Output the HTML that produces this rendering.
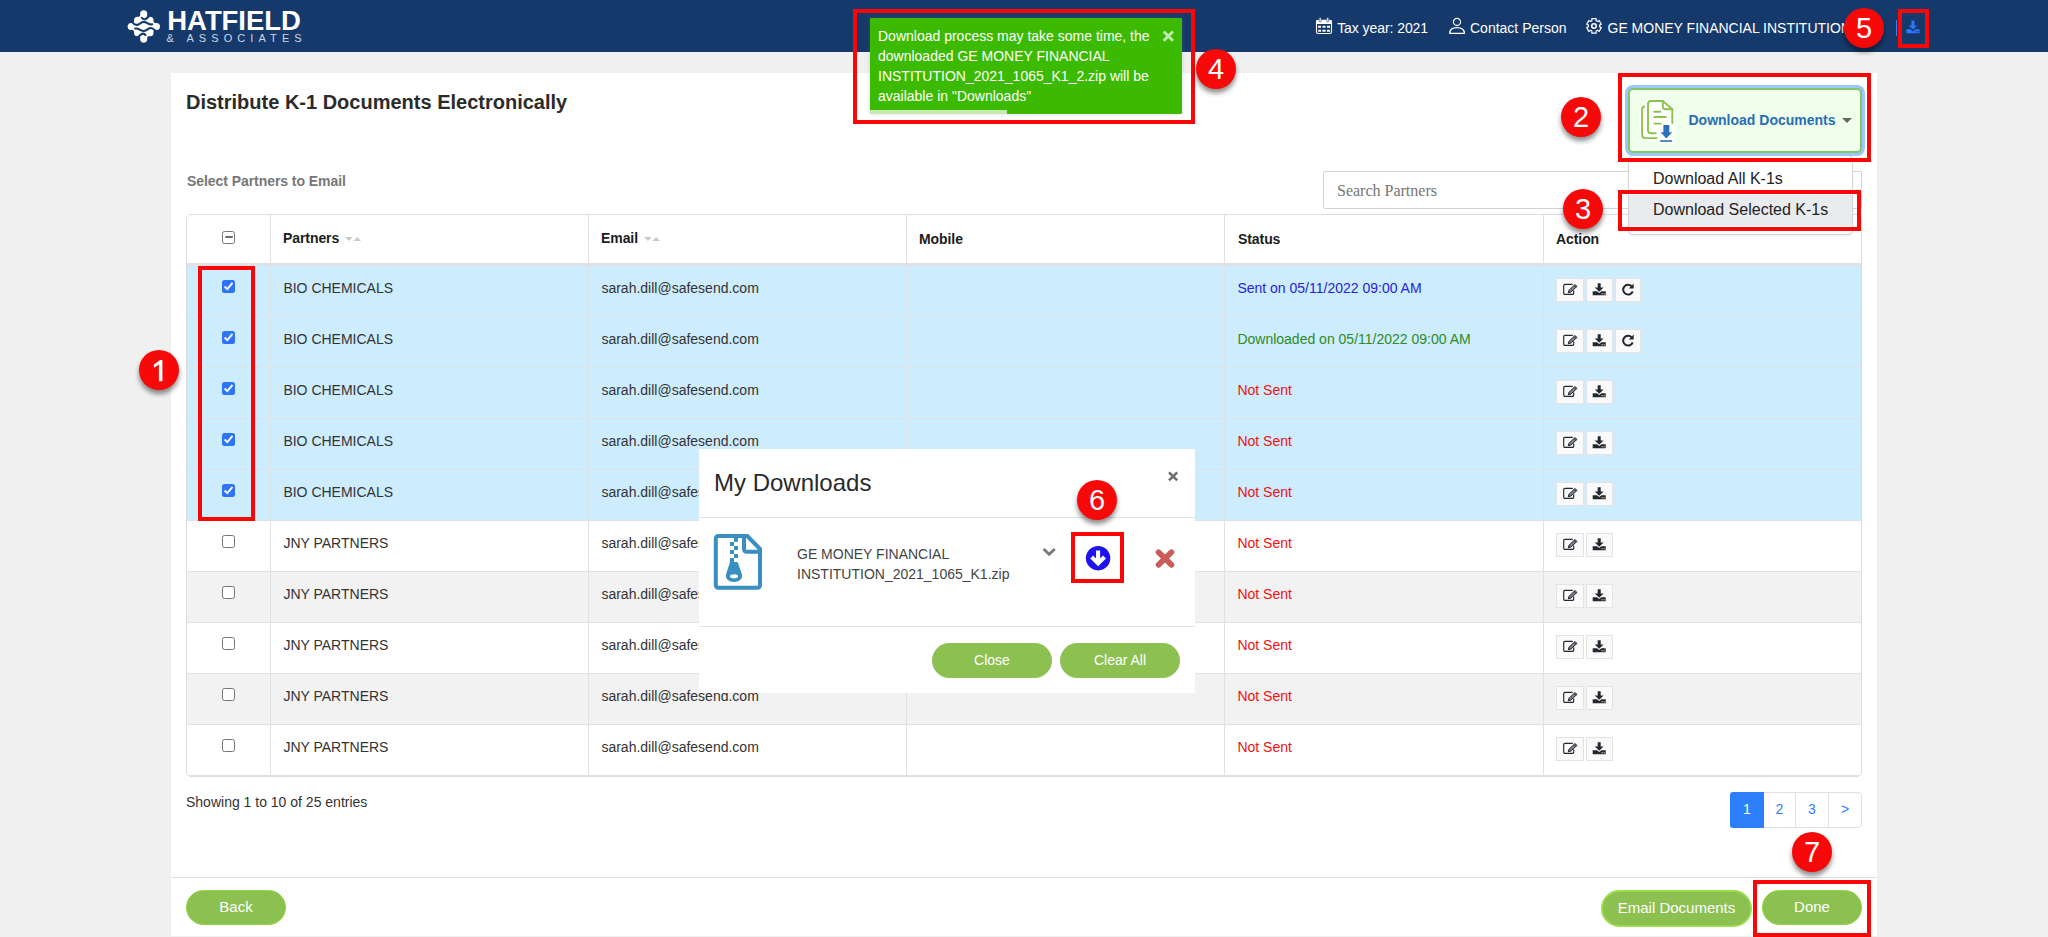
<!DOCTYPE html>
<html>
<head>
<meta charset="utf-8">
<title>Distribute K-1 Documents</title>
<style>
*{box-sizing:border-box;margin:0;padding:0}
html,body{width:2048px;height:937px;overflow:hidden}
body{background:#f0f0f0;font-family:"Liberation Sans",sans-serif;font-size:14px;color:#333;position:relative}
.abs{position:absolute}
svg{display:block}
#hdr{position:absolute;left:0;top:0;width:2048px;height:52px;background:#16396c}
#card{position:absolute;left:171px;top:73px;width:1706px;height:863px;background:#fff}
.nav{position:absolute;top:19px;color:#fff;font-size:14px;line-height:18px;white-space:nowrap}
.t{position:absolute;white-space:nowrap}
#tbl{position:absolute;left:186px;top:214px;width:1676px;height:563px;border:1px solid #ddd;border-radius:5px;background:#fff;overflow:hidden}
.row{position:absolute;left:0;width:1674px;height:51px;border-top:1px solid #dee2e6}
.row.sel{background:#cdecfe}
.row.odd{background:#f2f2f2}
.c{position:absolute;top:0;height:100%;border-left:1px solid #dee2e6}
.c1{left:83px;width:318px}.c2{left:401px;width:318px}.c3{left:719px;width:318px}.c4{left:1037px;width:319px}.c5{left:1356px;width:318px}
.th{position:absolute;left:12px;letter-spacing:-0.08px;top:15px;font-weight:bold;font-size:14px;line-height:18px;color:#1a1d20;white-space:nowrap}
.c4 .th{left:13px}
.c2 .th,.c1 .th{top:14px}
.sort{position:absolute;top:22px}
.s_Partners{left:74px}.s_Email{left:54.500px}
.sort i{position:absolute;width:0;height:0;border-left:3.800px solid transparent;border-right:3.800px solid transparent}
.sort .dn{left:0;top:0;border-top:4px solid #c8c8c8}
.sort .up{left:8.300px;top:0;border-bottom:4px solid #c8c8c8}
.row .tx{position:absolute;left:12.400px;top:13px;line-height:18px;white-space:nowrap;color:#333}
.blue{color:#2424dc!important}.green{color:#2e8b1e!important}.red{color:#ee1111!important}
.cb{position:absolute;left:35px;top:14px;width:13px;height:13px;border:1px solid #767676;border-radius:2.500px;background:#fff}
.cb.on{background:#2e74f6;border:none}
.cb.ind i{position:absolute;left:1.500px;top:4px;width:8px;height:2.200px;border-radius:1px;background:#6e6e6e}
.ab{position:absolute;top:12px;height:24px;border:1px solid #e3e3e3;background:#fafafa}
.ab svg{position:absolute;left:5.700px;top:4px}
.ab svg.dl{left:5.200px}.ab svg.rf{left:4.800px}
.pg{position:absolute;top:-1px;margin-left:-1px;height:36px;line-height:35px;text-align:center;font-size:14px}
.rr{position:absolute;border:4px solid #f90606}
.num{position:absolute;width:40px;height:40px;border-radius:50%;background:#f80909;color:#fff;font-size:29px;line-height:41px;text-align:center;box-shadow:0 4px 5px rgba(0,0,0,.45)}
.pill{position:absolute;border-radius:19px;background:#8cc152;color:#fff;font-size:15px;text-align:center;white-space:nowrap}
</style>
</head>
<body>
<div id="hdr"></div>
<svg class="abs" style="left:120px;top:4px" width="50" height="44" viewBox="120 4 50 44"><path d="M143.7 13.9L131.2 26.500L143.7 39.100L156.4 26.500Z" fill="#fff" stroke="#fff" stroke-width="2.600" stroke-linejoin="round"/><circle cx="143.7" cy="13.9" r="3.550" fill="#fff"/><circle cx="137.6" cy="20.2" r="3.550" fill="#fff"/><circle cx="150" cy="20.2" r="3.550" fill="#fff"/><circle cx="131.2" cy="26.5" r="3.550" fill="#fff"/><circle cx="143.7" cy="26.5" r="3.550" fill="#fff"/><circle cx="156.4" cy="26.5" r="3.550" fill="#fff"/><circle cx="137.6" cy="32.8" r="3.550" fill="#fff"/><circle cx="150" cy="32.8" r="3.550" fill="#fff"/><circle cx="143.7" cy="39.1" r="3.550" fill="#fff"/><g fill="none" stroke="#16396c" stroke-width="2.100" stroke-linecap="round"><path d="M141.9 17.900C143 19.300 145 19.500 146.600 18.300C147.600 17.600 148.400 16.700 149.300 15.500"/><path d="M132.6 22.600C134.300 24.600 136.200 25.100 137.800 24.700C139.800 24.200 141.400 21.900 143.700 21.850C146 21.800 148 24 150.500 24.400C151.200 24.500 151.800 24.400 152.200 24.300"/><path d="M154.800 30.300C153.100 28.300 151.200 27.800 149.600 28.200C147.600 28.700 146 31 143.700 31.050C141.400 31.100 139.400 28.900 136.900 28.500C136.200 28.400 135.600 28.500 135.200 28.600"/><path d="M145.500 35C144.400 33.600 142.400 33.400 140.800 34.600C139.800 35.300 139 36.200 138.100 37.400"/></g></svg>
<div class="t" style="left:167.3px;top:5.900px;font-size:27.500px;line-height:30px;font-weight:bold;color:#fff;letter-spacing:-0.05px">HATFIELD</div>
<div class="t" style="left:166.5px;top:31.300px;font-size:11px;line-height:14px;color:#d0d7e3;letter-spacing:5.080px">&amp; ASSOCIATES</div>
<svg class="abs" style="left:1315px;top:17px" width="18" height="18" viewBox="1315 17 18 18"><rect x="1316.5" y="20.4" width="15" height="13.1" rx="1.6" fill="none" stroke="#fff" stroke-width="1.1"/><rect x="1316.5" y="20.4" width="15" height="3.6" fill="#fff"/><rect x="1319.2" y="17.6" width="1.9" height="4.4" rx="0.9" fill="#fff" stroke="#16396c" stroke-width="0.6"/><rect x="1326.8" y="17.6" width="1.9" height="4.4" rx="0.9" fill="#fff" stroke="#16396c" stroke-width="0.6"/><rect x="1318.10" y="25.75" width="3" height="1.9" rx="0.3" fill="#fff"/><rect x="1318.10" y="29.85" width="3" height="1.9" rx="0.3" fill="#fff"/><rect x="1322.55" y="25.75" width="3" height="1.9" rx="0.3" fill="#fff"/><rect x="1322.55" y="29.85" width="3" height="1.9" rx="0.3" fill="#fff"/><rect x="1327.00" y="25.75" width="3" height="1.9" rx="0.3" fill="#fff"/><rect x="1327.00" y="29.85" width="3" height="1.9" rx="0.3" fill="#fff"/></svg>
<div class="nav" style="left:1337.200px;letter-spacing:-0.070px">Tax year: 2021</div>
<svg class="abs" style="left:1448px;top:17px" width="18" height="18" viewBox="1448 17 18 18" fill="none" stroke="#fff" stroke-width="1.25" stroke-linejoin="round"><circle cx="1457" cy="21.9" r="3.55"/><path d="M1449.7 33.3 L1464.4 33.3 C1464.4 29.6 1461.5 27.5 1457.05 27.5 C1452.6 27.5 1449.7 29.6 1449.7 33.3 Z"/></svg>
<div class="nav" style="left:1470px">Contact Person</div>
<svg class="abs" style="left:1585px;top:17px" width="18" height="18" viewBox="1585 17 18 18" fill="none" stroke="#fff" stroke-width="1.2" stroke-linejoin="round"><path d="M1591.88 20.72 L1591.83 18.72 L1596.17 18.72 L1596.12 20.72 L1597.43 21.48 L1599.13 20.43 L1601.30 24.19 L1599.55 25.14 L1599.55 26.66 L1601.30 27.61 L1599.13 31.37 L1597.43 30.32 L1596.12 31.08 L1596.17 33.08 L1591.83 33.08 L1591.88 31.08 L1590.57 30.32 L1588.87 31.37 L1586.70 27.61 L1588.45 26.66 L1588.45 25.14 L1586.70 24.19 L1588.87 20.43 L1590.57 21.48Z"/><circle cx="1594" cy="25.9" r="2.250" stroke-width="1.550"/></svg>
<div class="nav" style="left:1607.5px">GE MONEY FINANCIAL INSTITUTION</div>
<div class="abs" style="left:1896px;top:20px;width:1px;height:16px;background:#3c82fa"></div>
<svg class="abs" style="left:1905px;top:19px" width="17" height="16" viewBox="0 0 17 16"><path d="M6.4 1.6h3v5h2.9L7.9 10.6 3.5 6.6h2.9z" fill="#2d78fa"/><path d="M1.3 10.2h3.9l2.7 2.3 2.7-2.3h3.9v4H1.3z" fill="#2d78fa"/><rect x="10.3" y="12.2" width="1.2" height="1" fill="#16396c"/><rect x="12.3" y="12.2" width="1.2" height="1" fill="#16396c"/></svg>
<div id="card"></div>
<div class="t" style="left:186px;top:90px;font-size:20px;line-height:24px;font-weight:bold;color:#2b2b2b">Distribute K-1 Documents Electronically</div>
<div class="t" style="left:187px;top:172px;font-size:14px;line-height:18px;font-weight:bold;color:#777;letter-spacing:-0.060px">Select Partners to Email</div>
<div class="abs" style="left:1323px;top:171px;width:539px;height:38px;border:1px solid #ced4da;border-radius:2px;background:#fff"></div>
<div class="t" style="left:1337px;top:181px;font-family:'Liberation Serif',serif;font-size:16px;line-height:20px;color:#757575">Search Partners</div>
<div id="tbl">
<div class="abs" style="left:0;top:0;width:1674px;height:50px;border-bottom:2px solid #dee2e6"><div class="cb ind" style="top:16px"><i></i></div><div class="c c1"><span class="th">Partners</span><svg class="sort s_Partners" width="17" height="5" viewBox="0 0 17 5"><path d="M0.100 0h7.600l-3.800 4.100zM8.400 4.100l3.800-4.100 3.800 4.100z" fill="#c9c9c9"/></svg></div><div class="c c2"><span class="th">Email</span><svg class="sort s_Email" width="17" height="5" viewBox="0 0 17 5"><path d="M0.100 0h7.600l-3.800 4.100zM8.400 4.100l3.800-4.100 3.800 4.100z" fill="#c9c9c9"/></svg></div><div class="c c3"><span class="th">Mobile</span></div><div class="c c4"><span class="th">Status</span></div><div class="c c5"><span class="th">Action</span></div></div>
<div class="row sel" style="top:50px"><div class="cb on"><svg width="13" height="13" viewBox="0 0 13 13"><path d="M2.600 6.500l2.700 2.700 5.200-6.300" fill="none" stroke="#fff" stroke-width="1.900"/></svg></div><div class="c c1"><span class="tx">BIO CHEMICALS</span></div><div class="c c2"><span class="tx">sarah.dill@safesend.com</span></div><div class="c c3"></div><div class="c c4"><span class="tx blue">Sent on 05/11/2022 09:00 AM</span></div><div class="c c5"><div class="ab" style="left:12px;width:28px"><svg width="16" height="13" viewBox="0 0 16 13"><path d="M10.700 7.900V10.100a1.300 1.300 0 0 1-1.300 1.300H2a1.300 1.300 0 0 1-1.300-1.300V2.700a1.300 1.300 0 0 1 1.300-1.300H9.300" fill="none" stroke="#23272f" stroke-width="1.150" stroke-linecap="round"/><path d="M5.300 9.700L5.940 7.250L12.080 1.470L13.920 3.430L7.780 9.210Z" fill="#7c8088" stroke="#23272f" stroke-width="0.950" stroke-linejoin="round"/><path d="M5.300 9.700L5.800 7.900L7.100 9.200Z" fill="#23272f"/><path d="M11.100 2.400L13 4.400" stroke="#23272f" stroke-width="0.900"/></svg></div><div class="ab" style="left:42px;width:27px"><svg class="dl" width="15" height="13" viewBox="0 0 15 13"><path d="M5.700.300h3v4.300h2.900L7.200 8.700 2.800 4.600h2.900z" fill="#23272f"/><path d="M.700 8.200h4.300l2.200 1.900 2.200-1.900h4.300v4H.700z" fill="#23272f"/><rect x="9.500" y="10.300" width="1.150" height="1" fill="#f3ecc0"/><rect x="11.550" y="10.300" width="1.150" height="1" fill="#f3ecc0"/></svg></div><div class="ab" style="left:71px;width:26px"><svg class="rf" width="14" height="13" viewBox="0 0 14 13"><path d="M10.700 3.300A4.900 4.900 0 1 0 11.700 8.300" fill="none" stroke="#23272f" stroke-width="2"/><path d="M12.700.500v4.900H7.800z" fill="#23272f"/></svg></div></div></div>
<div class="row sel" style="top:101px"><div class="cb on"><svg width="13" height="13" viewBox="0 0 13 13"><path d="M2.600 6.500l2.700 2.700 5.200-6.300" fill="none" stroke="#fff" stroke-width="1.900"/></svg></div><div class="c c1"><span class="tx">BIO CHEMICALS</span></div><div class="c c2"><span class="tx">sarah.dill@safesend.com</span></div><div class="c c3"></div><div class="c c4"><span class="tx green">Downloaded on 05/11/2022 09:00 AM</span></div><div class="c c5"><div class="ab" style="left:12px;width:28px"><svg width="16" height="13" viewBox="0 0 16 13"><path d="M10.700 7.900V10.100a1.300 1.300 0 0 1-1.300 1.300H2a1.300 1.300 0 0 1-1.300-1.300V2.700a1.300 1.300 0 0 1 1.300-1.300H9.300" fill="none" stroke="#23272f" stroke-width="1.150" stroke-linecap="round"/><path d="M5.300 9.700L5.940 7.250L12.080 1.470L13.920 3.430L7.780 9.210Z" fill="#7c8088" stroke="#23272f" stroke-width="0.950" stroke-linejoin="round"/><path d="M5.300 9.700L5.800 7.900L7.100 9.200Z" fill="#23272f"/><path d="M11.100 2.400L13 4.400" stroke="#23272f" stroke-width="0.900"/></svg></div><div class="ab" style="left:42px;width:27px"><svg class="dl" width="15" height="13" viewBox="0 0 15 13"><path d="M5.700.300h3v4.300h2.900L7.200 8.700 2.800 4.600h2.900z" fill="#23272f"/><path d="M.700 8.200h4.300l2.200 1.900 2.200-1.900h4.300v4H.700z" fill="#23272f"/><rect x="9.500" y="10.300" width="1.150" height="1" fill="#f3ecc0"/><rect x="11.550" y="10.300" width="1.150" height="1" fill="#f3ecc0"/></svg></div><div class="ab" style="left:71px;width:26px"><svg class="rf" width="14" height="13" viewBox="0 0 14 13"><path d="M10.700 3.300A4.900 4.900 0 1 0 11.700 8.300" fill="none" stroke="#23272f" stroke-width="2"/><path d="M12.700.500v4.900H7.800z" fill="#23272f"/></svg></div></div></div>
<div class="row sel" style="top:152px"><div class="cb on"><svg width="13" height="13" viewBox="0 0 13 13"><path d="M2.600 6.500l2.700 2.700 5.200-6.300" fill="none" stroke="#fff" stroke-width="1.900"/></svg></div><div class="c c1"><span class="tx">BIO CHEMICALS</span></div><div class="c c2"><span class="tx">sarah.dill@safesend.com</span></div><div class="c c3"></div><div class="c c4"><span class="tx red">Not Sent</span></div><div class="c c5"><div class="ab" style="left:12px;width:28px"><svg width="16" height="13" viewBox="0 0 16 13"><path d="M10.700 7.900V10.100a1.300 1.300 0 0 1-1.300 1.300H2a1.300 1.300 0 0 1-1.300-1.300V2.700a1.300 1.300 0 0 1 1.300-1.300H9.300" fill="none" stroke="#23272f" stroke-width="1.150" stroke-linecap="round"/><path d="M5.300 9.700L5.940 7.250L12.080 1.470L13.920 3.430L7.780 9.210Z" fill="#7c8088" stroke="#23272f" stroke-width="0.950" stroke-linejoin="round"/><path d="M5.300 9.700L5.800 7.900L7.100 9.200Z" fill="#23272f"/><path d="M11.100 2.400L13 4.400" stroke="#23272f" stroke-width="0.900"/></svg></div><div class="ab" style="left:42px;width:27px"><svg class="dl" width="15" height="13" viewBox="0 0 15 13"><path d="M5.700.300h3v4.300h2.900L7.200 8.700 2.800 4.600h2.900z" fill="#23272f"/><path d="M.700 8.200h4.300l2.200 1.900 2.200-1.900h4.300v4H.700z" fill="#23272f"/><rect x="9.500" y="10.300" width="1.150" height="1" fill="#f3ecc0"/><rect x="11.550" y="10.300" width="1.150" height="1" fill="#f3ecc0"/></svg></div></div></div>
<div class="row sel" style="top:203px"><div class="cb on"><svg width="13" height="13" viewBox="0 0 13 13"><path d="M2.600 6.500l2.700 2.700 5.200-6.300" fill="none" stroke="#fff" stroke-width="1.900"/></svg></div><div class="c c1"><span class="tx">BIO CHEMICALS</span></div><div class="c c2"><span class="tx">sarah.dill@safesend.com</span></div><div class="c c3"></div><div class="c c4"><span class="tx red">Not Sent</span></div><div class="c c5"><div class="ab" style="left:12px;width:28px"><svg width="16" height="13" viewBox="0 0 16 13"><path d="M10.700 7.900V10.100a1.300 1.300 0 0 1-1.300 1.300H2a1.300 1.300 0 0 1-1.300-1.300V2.700a1.300 1.300 0 0 1 1.300-1.300H9.300" fill="none" stroke="#23272f" stroke-width="1.150" stroke-linecap="round"/><path d="M5.300 9.700L5.940 7.250L12.080 1.470L13.920 3.430L7.780 9.210Z" fill="#7c8088" stroke="#23272f" stroke-width="0.950" stroke-linejoin="round"/><path d="M5.300 9.700L5.800 7.900L7.100 9.200Z" fill="#23272f"/><path d="M11.100 2.400L13 4.400" stroke="#23272f" stroke-width="0.900"/></svg></div><div class="ab" style="left:42px;width:27px"><svg class="dl" width="15" height="13" viewBox="0 0 15 13"><path d="M5.700.300h3v4.300h2.900L7.200 8.700 2.800 4.600h2.900z" fill="#23272f"/><path d="M.700 8.200h4.300l2.200 1.900 2.200-1.900h4.300v4H.700z" fill="#23272f"/><rect x="9.500" y="10.300" width="1.150" height="1" fill="#f3ecc0"/><rect x="11.550" y="10.300" width="1.150" height="1" fill="#f3ecc0"/></svg></div></div></div>
<div class="row sel" style="top:254px"><div class="cb on"><svg width="13" height="13" viewBox="0 0 13 13"><path d="M2.600 6.500l2.700 2.700 5.200-6.300" fill="none" stroke="#fff" stroke-width="1.900"/></svg></div><div class="c c1"><span class="tx">BIO CHEMICALS</span></div><div class="c c2"><span class="tx">sarah.dill@safesend.com</span></div><div class="c c3"></div><div class="c c4"><span class="tx red">Not Sent</span></div><div class="c c5"><div class="ab" style="left:12px;width:28px"><svg width="16" height="13" viewBox="0 0 16 13"><path d="M10.700 7.900V10.100a1.300 1.300 0 0 1-1.300 1.300H2a1.300 1.300 0 0 1-1.300-1.300V2.700a1.300 1.300 0 0 1 1.300-1.300H9.300" fill="none" stroke="#23272f" stroke-width="1.150" stroke-linecap="round"/><path d="M5.300 9.700L5.940 7.250L12.080 1.470L13.920 3.430L7.780 9.210Z" fill="#7c8088" stroke="#23272f" stroke-width="0.950" stroke-linejoin="round"/><path d="M5.300 9.700L5.800 7.900L7.100 9.200Z" fill="#23272f"/><path d="M11.100 2.400L13 4.400" stroke="#23272f" stroke-width="0.900"/></svg></div><div class="ab" style="left:42px;width:27px"><svg class="dl" width="15" height="13" viewBox="0 0 15 13"><path d="M5.700.300h3v4.300h2.900L7.200 8.700 2.800 4.600h2.900z" fill="#23272f"/><path d="M.700 8.200h4.300l2.200 1.900 2.200-1.900h4.300v4H.700z" fill="#23272f"/><rect x="9.500" y="10.300" width="1.150" height="1" fill="#f3ecc0"/><rect x="11.550" y="10.300" width="1.150" height="1" fill="#f3ecc0"/></svg></div></div></div>
<div class="row " style="top:305px"><div class="cb"></div><div class="c c1"><span class="tx">JNY PARTNERS</span></div><div class="c c2"><span class="tx">sarah.dill@safesend.com</span></div><div class="c c3"></div><div class="c c4"><span class="tx red">Not Sent</span></div><div class="c c5"><div class="ab" style="left:12px;width:28px"><svg width="16" height="13" viewBox="0 0 16 13"><path d="M10.700 7.900V10.100a1.300 1.300 0 0 1-1.300 1.300H2a1.300 1.300 0 0 1-1.300-1.300V2.700a1.300 1.300 0 0 1 1.300-1.300H9.300" fill="none" stroke="#23272f" stroke-width="1.150" stroke-linecap="round"/><path d="M5.300 9.700L5.940 7.250L12.080 1.470L13.920 3.430L7.780 9.210Z" fill="#7c8088" stroke="#23272f" stroke-width="0.950" stroke-linejoin="round"/><path d="M5.300 9.700L5.800 7.900L7.100 9.200Z" fill="#23272f"/><path d="M11.100 2.400L13 4.400" stroke="#23272f" stroke-width="0.900"/></svg></div><div class="ab" style="left:42px;width:27px"><svg class="dl" width="15" height="13" viewBox="0 0 15 13"><path d="M5.700.300h3v4.300h2.900L7.200 8.700 2.800 4.600h2.900z" fill="#23272f"/><path d="M.700 8.200h4.300l2.200 1.900 2.200-1.900h4.300v4H.700z" fill="#23272f"/><rect x="9.500" y="10.300" width="1.150" height="1" fill="#f3ecc0"/><rect x="11.550" y="10.300" width="1.150" height="1" fill="#f3ecc0"/></svg></div></div></div>
<div class="row odd" style="top:356px"><div class="cb"></div><div class="c c1"><span class="tx">JNY PARTNERS</span></div><div class="c c2"><span class="tx">sarah.dill@safesend.com</span></div><div class="c c3"></div><div class="c c4"><span class="tx red">Not Sent</span></div><div class="c c5"><div class="ab" style="left:12px;width:28px"><svg width="16" height="13" viewBox="0 0 16 13"><path d="M10.700 7.900V10.100a1.300 1.300 0 0 1-1.300 1.300H2a1.300 1.300 0 0 1-1.300-1.300V2.700a1.300 1.300 0 0 1 1.300-1.300H9.300" fill="none" stroke="#23272f" stroke-width="1.150" stroke-linecap="round"/><path d="M5.300 9.700L5.940 7.250L12.080 1.470L13.920 3.430L7.780 9.210Z" fill="#7c8088" stroke="#23272f" stroke-width="0.950" stroke-linejoin="round"/><path d="M5.300 9.700L5.800 7.900L7.100 9.200Z" fill="#23272f"/><path d="M11.100 2.400L13 4.400" stroke="#23272f" stroke-width="0.900"/></svg></div><div class="ab" style="left:42px;width:27px"><svg class="dl" width="15" height="13" viewBox="0 0 15 13"><path d="M5.700.300h3v4.300h2.900L7.200 8.700 2.800 4.600h2.900z" fill="#23272f"/><path d="M.700 8.200h4.300l2.200 1.900 2.200-1.900h4.300v4H.700z" fill="#23272f"/><rect x="9.500" y="10.300" width="1.150" height="1" fill="#f3ecc0"/><rect x="11.550" y="10.300" width="1.150" height="1" fill="#f3ecc0"/></svg></div></div></div>
<div class="row " style="top:407px"><div class="cb"></div><div class="c c1"><span class="tx">JNY PARTNERS</span></div><div class="c c2"><span class="tx">sarah.dill@safesend.com</span></div><div class="c c3"></div><div class="c c4"><span class="tx red">Not Sent</span></div><div class="c c5"><div class="ab" style="left:12px;width:28px"><svg width="16" height="13" viewBox="0 0 16 13"><path d="M10.700 7.900V10.100a1.300 1.300 0 0 1-1.300 1.300H2a1.300 1.300 0 0 1-1.300-1.300V2.700a1.300 1.300 0 0 1 1.300-1.300H9.300" fill="none" stroke="#23272f" stroke-width="1.150" stroke-linecap="round"/><path d="M5.300 9.700L5.940 7.250L12.080 1.470L13.920 3.430L7.780 9.210Z" fill="#7c8088" stroke="#23272f" stroke-width="0.950" stroke-linejoin="round"/><path d="M5.300 9.700L5.800 7.900L7.100 9.200Z" fill="#23272f"/><path d="M11.100 2.400L13 4.400" stroke="#23272f" stroke-width="0.900"/></svg></div><div class="ab" style="left:42px;width:27px"><svg class="dl" width="15" height="13" viewBox="0 0 15 13"><path d="M5.700.300h3v4.300h2.900L7.200 8.700 2.800 4.600h2.900z" fill="#23272f"/><path d="M.700 8.200h4.300l2.200 1.900 2.200-1.900h4.300v4H.700z" fill="#23272f"/><rect x="9.500" y="10.300" width="1.150" height="1" fill="#f3ecc0"/><rect x="11.550" y="10.300" width="1.150" height="1" fill="#f3ecc0"/></svg></div></div></div>
<div class="row odd" style="top:458px"><div class="cb"></div><div class="c c1"><span class="tx">JNY PARTNERS</span></div><div class="c c2"><span class="tx">sarah.dill@safesend.com</span></div><div class="c c3"></div><div class="c c4"><span class="tx red">Not Sent</span></div><div class="c c5"><div class="ab" style="left:12px;width:28px"><svg width="16" height="13" viewBox="0 0 16 13"><path d="M10.700 7.900V10.100a1.300 1.300 0 0 1-1.300 1.300H2a1.300 1.300 0 0 1-1.300-1.300V2.700a1.300 1.300 0 0 1 1.300-1.300H9.300" fill="none" stroke="#23272f" stroke-width="1.150" stroke-linecap="round"/><path d="M5.300 9.700L5.940 7.250L12.080 1.470L13.920 3.430L7.780 9.210Z" fill="#7c8088" stroke="#23272f" stroke-width="0.950" stroke-linejoin="round"/><path d="M5.300 9.700L5.800 7.900L7.100 9.200Z" fill="#23272f"/><path d="M11.100 2.400L13 4.400" stroke="#23272f" stroke-width="0.900"/></svg></div><div class="ab" style="left:42px;width:27px"><svg class="dl" width="15" height="13" viewBox="0 0 15 13"><path d="M5.700.300h3v4.300h2.900L7.200 8.700 2.800 4.600h2.900z" fill="#23272f"/><path d="M.700 8.200h4.300l2.200 1.900 2.200-1.900h4.300v4H.700z" fill="#23272f"/><rect x="9.500" y="10.300" width="1.150" height="1" fill="#f3ecc0"/><rect x="11.550" y="10.300" width="1.150" height="1" fill="#f3ecc0"/></svg></div></div></div>
<div class="row " style="top:509px"><div class="cb"></div><div class="c c1"><span class="tx">JNY PARTNERS</span></div><div class="c c2"><span class="tx">sarah.dill@safesend.com</span></div><div class="c c3"></div><div class="c c4"><span class="tx red">Not Sent</span></div><div class="c c5"><div class="ab" style="left:12px;width:28px"><svg width="16" height="13" viewBox="0 0 16 13"><path d="M10.700 7.900V10.100a1.300 1.300 0 0 1-1.300 1.300H2a1.300 1.300 0 0 1-1.300-1.300V2.700a1.300 1.300 0 0 1 1.300-1.300H9.300" fill="none" stroke="#23272f" stroke-width="1.150" stroke-linecap="round"/><path d="M5.300 9.700L5.940 7.250L12.080 1.470L13.920 3.430L7.780 9.210Z" fill="#7c8088" stroke="#23272f" stroke-width="0.950" stroke-linejoin="round"/><path d="M5.300 9.700L5.800 7.900L7.100 9.200Z" fill="#23272f"/><path d="M11.100 2.400L13 4.400" stroke="#23272f" stroke-width="0.900"/></svg></div><div class="ab" style="left:42px;width:27px"><svg class="dl" width="15" height="13" viewBox="0 0 15 13"><path d="M5.700.300h3v4.300h2.900L7.200 8.700 2.800 4.600h2.900z" fill="#23272f"/><path d="M.700 8.200h4.300l2.200 1.900 2.200-1.900h4.300v4H.700z" fill="#23272f"/><rect x="9.500" y="10.300" width="1.150" height="1" fill="#f3ecc0"/><rect x="11.550" y="10.300" width="1.150" height="1" fill="#f3ecc0"/></svg></div></div></div>
<div class="abs" style="left:0;top:560px;width:1674px;height:1px;background:#dee2e6"></div>
</div>
<div class="t" style="left:186px;top:793px;font-size:14px;line-height:18px;color:#333">Showing 1 to 10 of 25 entries</div>
<div class="abs" style="left:1730px;top:792px;width:132px;height:36px;border:1px solid #dee2e6;border-radius:4px;overflow:hidden;background:#fff"><div class="pg" style="left:33px;width:32px;border-left:1px solid #dee2e6;color:#2d7ff9;">2</div><div class="pg" style="left:65px;width:33px;border-left:1px solid #dee2e6;color:#2d7ff9;">3</div><div class="pg" style="left:98px;width:33px;border-left:1px solid #dee2e6;color:#2d7ff9;">&gt;</div></div><div class="abs" style="left:1730px;top:792px;width:34px;height:36px;line-height:35px;text-align:center;font-size:14px;background:#2d7ff9;color:#fff;border-radius:3px 0 0 3px">1</div>
<div class="abs" style="left:171px;top:877px;width:1706px;height:1px;background:#ddd"></div>
<div class="pill" style="left:186px;top:890px;width:100px;height:35px;line-height:32px;border:1px solid #8fd63f">Back</div>
<div class="pill" style="left:1601px;top:890px;width:151px;height:37px;line-height:32px;border:2px solid #9cdc4c">Email Documents</div>
<div class="pill" style="left:1762px;top:890px;width:100px;height:35px;line-height:32px;border:1px solid #8fd63f">Done</div>
<div class="abs" style="left:1628px;top:155px;width:225px;height:80px;border:1px solid #d4d4d4;border-radius:5px;background:#fff;box-shadow:0 1px 2px rgba(0,0,0,.08)"></div>
<div class="t" style="left:1653px;top:169px;font-size:16px;line-height:20px;color:#222">Download All K-1s</div>
<div class="abs" style="left:1629px;top:195px;width:223px;height:30.500px;background:#e9ecef"></div>
<div class="t" style="left:1653px;top:199.500px;font-size:16px;line-height:20px;color:#222">Download Selected K-1s</div>
<div class="abs" style="left:1625px;top:85px;width:240px;height:71px;border-radius:8px;background:#9bc8fb"></div>
<div class="abs" style="left:1628px;top:88px;width:234px;height:65px;border-radius:5px;background:#f0ffeb;border:2px solid #86c56c"></div>
<svg class="abs" style="left:1630px;top:92px" width="60" height="58" viewBox="1630 92 60 58" fill="none" stroke-linecap="round" stroke-linejoin="round"><g fill="#fff" stroke="#fff" stroke-width="4.600"><rect x="1642.100" y="106.500" width="14.500" height="31.600" rx="3"/><path d="M1651 101h11.800l9.500 8.300V133.200H1651a3 3 0 0 1-3-3V104a3 3 0 0 1 3-3z"/></g><g stroke="#fff" stroke-width="4.6"><path d="M1655.7 133.200H1651a3 3 0 0 1-3-3V104a3 3 0 0 1 3-3h11.800l9.500 8.300V123"/><path d="M1662.8 101v5.300a3 3 0 0 0 3 3h6.500"/><path d="M1644.2 106.500a3 3 0 0 0-2.100 2.900V135a3.100 3.100 0 0 0 3.100 3.100h11.400"/><path d="M1654.2 111.800h6M1654.2 117h11.600M1654.2 123.600h6.600"/></g><path d="M1662.4 124.100h7.900v7.100h3.900l-7.900 8.200-7.800-8.200h3.900zM1659.200 139.200h14v3.600h-14z" fill="#fff" stroke="#fff" stroke-width="2"/><g stroke="#8bc34a" stroke-width="1.9"><path d="M1655.7 133.200H1651a3 3 0 0 1-3-3V104a3 3 0 0 1 3-3h11.800l9.500 8.300V123"/><path d="M1662.8 101v5.300a3 3 0 0 0 3 3h6.500"/><path d="M1644.2 106.500a3 3 0 0 0-2.100 2.900V135a3.100 3.100 0 0 0 3.100 3.100h11.400"/><path d="M1654.2 111.800h6M1654.2 117h11.600M1654.2 123.600h6.600"/></g><path d="M1663.400 125.100h5.900v7.100h2.900l-5.900 6.200-5.800-6.200h2.900z" fill="#2a71b8"/><rect x="1660.200" y="140.200" width="12" height="1.600" fill="#2a71b8"/></svg>
<div class="t" style="left:1688.5px;top:111px;font-size:14px;line-height:18px;font-weight:bold;color:#2a6db5">Download Documents</div>
<div class="abs" style="left:1842px;top:118px;width:0;height:0;border-left:5px solid transparent;border-right:5px solid transparent;border-top:5px solid #666"></div>
<div class="abs" style="left:870px;top:18px;width:312px;height:96px;background:#3cba00;box-shadow:0 0 4px rgba(130,130,140,.28);border-radius:1px"></div>
<div class="abs" style="left:870px;top:109.600px;width:137px;height:4.400px;background:#c5eab0"></div>
<div class="abs" style="left:878px;top:26px;width:285px;font-size:14px;line-height:20px;color:#fff">Download process may take some time, the downloaded GE MONEY FINANCIAL INSTITUTION_2021_1065_K1_2.zip will be available in "Downloads"</div>
<svg class="abs" style="left:1162px;top:30px" width="13" height="13" viewBox="0 0 13 13"><path d="M1.700 1.500l9.200 9.200M10.900 1.500l-9.200 9.200" stroke="#bdeab0" stroke-width="2.900"/></svg>
<div class="abs" style="left:699px;top:449px;width:496px;height:244px;background:#fff"></div>
<div class="abs" style="left:699px;top:517px;width:496px;height:1px;background:#dee2e6"></div>
<div class="abs" style="left:699px;top:626px;width:496px;height:1px;background:#dee2e6"></div>
<div class="t" style="left:714px;top:468px;font-size:24px;line-height:30px;color:#2a2a2a">My Downloads</div>
<svg class="abs" style="left:1167px;top:470px" width="13" height="13" viewBox="0 0 13 13"><path d="M2 2.400l8.200 8M10.200 2.400l-8.200 8" stroke="#6c6c6c" stroke-width="2.500"/></svg>
<svg class="abs" style="left:705px;top:525px" width="70" height="75" viewBox="0 0 70 75"><path d="M13.300 11h29l12.700 13V60.300a2.500 2.500 0 0 1-2.500 2.500H13.300a2.500 2.500 0 0 1-2.500-2.500V13.500a2.500 2.500 0 0 1 2.500-2.500z" fill="#fff" stroke="#3a8fc2" stroke-width="4" stroke-linejoin="round"/><path d="M39 11.500v12.800a2.500 2.500 0 0 0 2.500 2.500H55" fill="none" stroke="#3a8fc2" stroke-width="4"/><g fill="#3a8fc2"><rect x="29" y="12.800" width="4" height="4"/><rect x="25" y="17" width="4" height="4"/><rect x="29" y="21" width="4" height="4"/><rect x="25" y="25" width="4" height="4"/><rect x="29" y="29" width="4" height="4"/><rect x="25" y="33" width="4" height="4"/><path d="M25 37h7.200l.8 1 4 11.500c.9 4.500-3 7.500-8 7.500s-9-3-8-7.500z"/></g><ellipse cx="29" cy="51.200" rx="4" ry="2" fill="#fff"/></svg>
<div class="t" style="left:797px;top:544px;font-size:14px;line-height:20px;color:#444">GE MONEY FINANCIAL<br>INSTITUTION_2021_1065_K1.zip</div>
<svg class="abs" style="left:1041px;top:546px" width="16" height="12" viewBox="0 0 16 12"><path d="M2.600 3l5.600 5.300 5.600-5.300" fill="none" stroke="#7d7a78" stroke-width="3"/></svg>
<svg class="abs" style="left:1084px;top:544px" width="28" height="28" viewBox="0 0 28 28"><circle cx="14.100" cy="14.200" r="12.200" fill="#1d12f0"/><path d="M14.100 6.400v12.500M7.700 13l6.400 6.400 6.400-6.400" fill="none" stroke="#fff" stroke-width="4.100"/></svg>
<svg class="abs" style="left:1154px;top:548px" width="22" height="21" viewBox="0 0 22 21"><path d="M4.600 4.300l12.800 12.500M17.400 4.300l-12.800 12.500" stroke="#c95d59" stroke-width="5.800" stroke-linecap="round"/></svg>
<div class="pill" style="left:932px;top:643px;width:120px;height:35px;line-height:35px;font-size:14px">Close</div>
<div class="pill" style="left:1060px;top:643px;width:120px;height:35px;line-height:35px;font-size:14px">Clear All</div>
<div class="rr" style="left:198px;top:266px;width:57px;height:255px"></div>
<div class="rr" style="left:1618px;top:73px;width:253px;height:89px"></div>
<div class="rr" style="left:1618px;top:190px;width:243px;height:41px"></div>
<div class="rr" style="left:853px;top:9px;width:342px;height:115px"></div>
<div class="rr" style="left:1898px;top:9px;width:31px;height:39px"></div>
<div class="rr" style="left:1071px;top:532px;width:53px;height:51px"></div>
<div class="rr" style="left:1753px;top:880px;width:118px;height:57px"></div>
<div class="num" style="left:139px;top:350px"><svg width="40" height="40" viewBox="0 0 40 40"><path d="M23.400 9.900V31.200H19.900V14.400L15.100 17.700L14.700 14.700L21.100 9.900Z" fill="#fff"/></svg></div>
<div class="num" style="left:1561px;top:97px">2</div>
<div class="num" style="left:1563px;top:189px">3</div>
<div class="num" style="left:1196px;top:48.8px">4</div>
<div class="num" style="left:1844px;top:8px">5</div>
<div class="num" style="left:1077px;top:480px">6</div>
<div class="num" style="left:1792px;top:832px">7</div>
</body>
</html>
